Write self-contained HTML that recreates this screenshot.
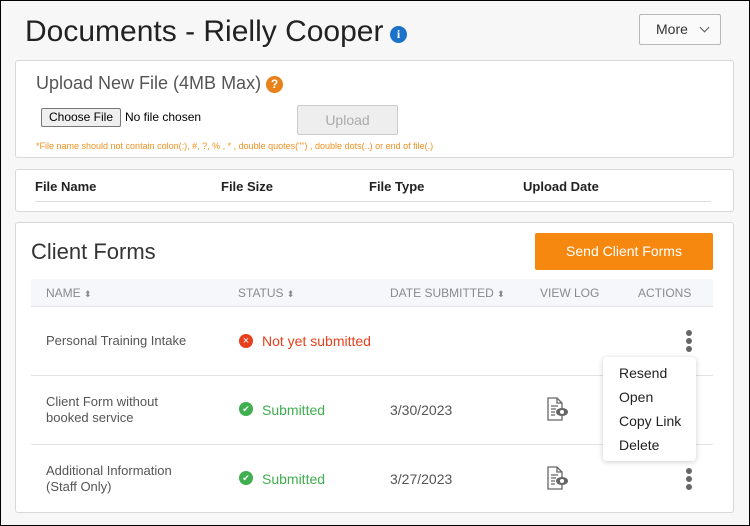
<!DOCTYPE html>
<html><head><style>
*{box-sizing:border-box;margin:0;padding:0}
body{width:750px;height:526px;background:#f7f7f7;font-family:"Liberation Sans",sans-serif;position:relative;overflow:hidden}
.a{position:absolute}
.panel{position:absolute;background:#fff;border:1px solid #d8d8d8;border-radius:3px}
.dots{position:absolute;width:6px}
.dots i{display:block;width:6px;height:6px;border-radius:50%;background:#666;margin-bottom:2px}
.menu div{height:24px;line-height:24px;padding-left:16px;font-size:14px;color:#222}
</style></head><body>
<div class="a" style="left:0;top:0;width:750px;height:526px;border:1px solid #000;z-index:9;pointer-events:none"></div>
<div class="a" style="left:25px;top:15px;font-size:30px;color:#222">Documents - Rielly Cooper</div>
<div class="a" style="left:390px;top:26px;width:17px;height:17px;border-radius:50%;background:#1a73c8;color:#fff;font-size:12px;font-weight:bold;text-align:center;line-height:17px;font-family:'Liberation Serif',serif">i</div>
<div class="a" style="left:639px;top:14px;width:82px;height:31px;border:1px solid #b8b8b8;border-radius:2px;background:#fafafa;font-size:14px;color:#333;line-height:29px;padding-left:16px">More <span style="display:inline-block;width:7px;height:7px;border-right:1.5px solid #555;border-bottom:1.5px solid #555;transform:rotate(45deg);margin-left:9px;position:relative;top:-3px"></span></div>

<div class="panel" style="left:15px;top:60px;width:719px;height:98px">
<div class="a" style="left:20px;top:12px;font-size:18px;color:#555">Upload New File (4MB Max)</div>
<div class="a" style="left:250px;top:15px;width:17px;height:17px;border-radius:50%;background:#e8811a;color:#fff;font-size:12px;font-weight:bold;text-align:center;line-height:17px">?</div>
<div class="a" style="left:25px;top:47px;width:80px;height:19px;border:1px solid #767676;border-radius:2px;background:#efefef;font-size:12px;text-align:center;line-height:17px;color:#000">Choose File</div>
<div class="a" style="left:109px;top:49px;font-size:12px;color:#000">No file chosen</div>
<div class="a" style="left:281px;top:44px;width:101px;height:30px;border:1px solid #ccc;border-radius:2px;background:#eee;color:#aaa;font-size:14px;text-align:center;line-height:28px">Upload</div>
<div class="a" style="left:20px;top:80px;font-size:9px;color:#f0901e">*File name should not contain colon(:), #, ?, % , * , double quotes("") , double dots(..) or end of file(.)</div>
</div>

<div class="panel" style="left:15px;top:169px;width:719px;height:43px">
<div class="a" style="left:19px;top:9px;font-size:13px;font-weight:bold;color:#222">File Name</div>
<div class="a" style="left:205px;top:9px;font-size:13px;font-weight:bold;color:#222">File Size</div>
<div class="a" style="left:353px;top:9px;font-size:13px;font-weight:bold;color:#222">File Type</div>
<div class="a" style="left:507px;top:9px;font-size:13px;font-weight:bold;color:#222">Upload Date</div>
<div class="a" style="left:19px;top:31px;width:676px;height:1px;background:#ddd"></div>
</div>

<div class="panel" style="left:15px;top:222px;width:719px;height:291px">
<div class="a" style="left:15px;top:16px;font-size:22px;color:#333">Client Forms</div>
<div class="a" style="left:519px;top:10px;width:178px;height:37px;background:#f7880f;border-radius:2px;color:#fff;font-size:14px;text-align:center;line-height:37px">Send Client Forms</div>
<div class="a" style="left:15px;top:56px;width:682px;height:28px;background:#f5f7fa;border-bottom:1px solid #e3e3e3;font-size:12px;color:#8a8a8a;line-height:28px">
<span class="a" style="left:15px">NAME <span style="font-size:9px">⬍</span></span>
<span class="a" style="left:207px">STATUS <span style="font-size:9px">⬍</span></span>
<span class="a" style="left:359px">DATE SUBMITTED <span style="font-size:9px">⬍</span></span>
<span class="a" style="left:509px">VIEW LOG</span>
<span class="a" style="left:607px">ACTIONS</span>
</div>
<div class="a" style="left:15px;top:152px;width:682px;height:1px;background:#e3e3e3"></div>
<div class="a" style="left:15px;top:221px;width:682px;height:1px;background:#e3e3e3"></div>

<div class="a" style="left:30px;top:110px;font-size:13px;color:#555">Personal Training Intake</div>
<div class="a" style="left:223px;top:111px;width:14px;height:14px;border-radius:50%;background:#e8401c;color:#fff;font-size:11px;text-align:center;line-height:14px">×</div>
<div class="a" style="left:246px;top:110px;font-size:14px;color:#e8401c">Not yet submitted</div>
<div class="dots" style="left:670px;top:107px"><i></i><i></i><i></i></div>

<div class="a" style="left:30px;top:171px;font-size:13px;color:#555;line-height:16px">Client Form without<br>booked service</div>
<div class="a" style="left:223px;top:179px;width:14px;height:14px;border-radius:50%;background:#3fae4f;color:#fff;font-size:9px;text-align:center;line-height:14px">✔</div>
<div class="a" style="left:246px;top:179px;font-size:14px;color:#3fae4f">Submitted</div>
<div class="a" style="left:374px;top:179px;font-size:14px;color:#555">3/30/2023</div>

<div class="a" style="left:30px;top:240px;font-size:13px;color:#555;line-height:16px">Additional Information<br>(Staff Only)</div>
<div class="a" style="left:223px;top:248px;width:14px;height:14px;border-radius:50%;background:#3fae4f;color:#fff;font-size:9px;text-align:center;line-height:14px">✔</div>
<div class="a" style="left:246px;top:248px;font-size:14px;color:#3fae4f">Submitted</div>
<div class="a" style="left:374px;top:248px;font-size:14px;color:#555">3/27/2023</div>
<div class="dots" style="left:670px;top:245px"><i></i><i></i><i></i></div>

<svg class="a" style="left:530px;top:174px" width="24" height="24" viewBox="0 0 24 24" fill="none" stroke="#666" stroke-width="1.3"><path d="M2 1h9l5 5v17H2z M11 1v5h5"/><path d="M5 9h7M5 12h5M5 15h4M5 18h4"/><ellipse cx="16" cy="15" rx="6" ry="4" fill="#666" stroke="none"/><circle cx="16" cy="15" r="2" fill="#fff" stroke="none"/></svg>
<svg class="a" style="left:530px;top:243px" width="24" height="24" viewBox="0 0 24 24" fill="none" stroke="#666" stroke-width="1.3"><path d="M2 1h9l5 5v17H2z M11 1v5h5"/><path d="M5 9h7M5 12h5M5 15h4M5 18h4"/><ellipse cx="16" cy="15" rx="6" ry="4" fill="#666" stroke="none"/><circle cx="16" cy="15" r="2" fill="#fff" stroke="none"/></svg>
</div>

<div class="a menu" style="left:603px;top:357px;width:93px;height:104px;background:#fff;border-radius:4px;box-shadow:0 1px 6px rgba(0,0,0,.2);padding-top:4px">
<div>Resend</div><div>Open</div><div>Copy Link</div><div>Delete</div>
</div>
</body></html>
